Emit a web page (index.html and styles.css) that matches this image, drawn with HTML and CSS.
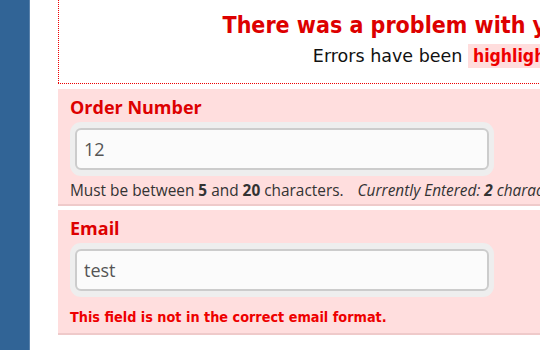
FILE: index.html
```html
<!DOCTYPE html>
<html lang="en">
<head>
<meta charset="utf-8">
<title>Form errors</title>
<link rel="stylesheet" href="styles.css">
</head>
<body>
<div class="layout">
  <aside class="sidebar"></aside>
  <main class="main">
    <div class="column">
      <div class="alert">
        <h1 class="alert-title">There was a problem with your submission.</h1>
        <p class="alert-text">Errors have been <span class="hl">highlighted</span> below.</p>
      </div>
      <div class="field">
        <label class="field-label" for="order">Order Number</label>
        <div class="ring"><input class="input" id="order" type="text" value="12"></div>
        <p class="help">Must be between <b>5</b> and <b>20</b> characters.<em class="count">Currently Entered: <b>2</b> characters</em></p>
      </div>
      <div class="field">
        <label class="field-label" for="email">Email</label>
        <div class="ring"><input class="input" id="email" type="text" value="test"></div>
        <p class="error">This field is not in the correct email format.</p>
      </div>
    </div>
  </main>
</div>
</body>
</html>
```
FILE: styles.css
```css
html, body {
  margin: 0;
  padding: 0;
  background: #ffffff;
  overflow: hidden;
}
body {
  width: 540px;
  height: 350px;
  font-family: "Open Sans", "DejaVu Sans", sans-serif;
}
.layout {
  display: flex;
  height: 350px;
}
.sidebar {
  flex: 0 0 29px;
  background: #316496;
  border-right: 1px solid #5a82ab;
}
.main {
  flex: 1 1 auto;
  padding-left: 28px;
  min-width: 0;
}
.column {
  width: 838px;
}
.alert {
  padding: 12px 11px 18px;
  text-align: center;
  margin-bottom: 5px;
  background-image:
    repeating-linear-gradient(to bottom, #ee0000 0 1px, transparent 1px 2px),
    repeating-linear-gradient(to bottom, #ee0000 0 1px, transparent 1px 2px),
    repeating-linear-gradient(to right, #ee0000 0 1px, transparent 1px 2px);
  background-size: 1px 100%, 1px 100%, 100% 1px;
  background-position: left top, right top, left bottom;
  background-repeat: no-repeat;
}
.alert-title {
  margin: 0;
  font-family: "DejaVu Sans Condensed", "DejaVu Sans", sans-serif;
  font-stretch: condensed;
  font-weight: 700;
  font-size: 23px;
  line-height: 26px;
  color: #dd0000;
}
.alert-text {
  margin: 8px 0 0;
  font-family: "DejaVu Sans", sans-serif;
  font-size: 17.5px;
  line-height: 20px;
  color: #111111;
}
.hl {
  background: #ffdddd;
  color: #ee0000;
  font-weight: 700;
  padding: 2px 5px;
  font-family: "DejaVu Sans Condensed", "DejaVu Sans", sans-serif;
  font-stretch: condensed;
}
.field {
  background: #ffdede;
  border-bottom: 2px solid #efcaca;
  padding: 6px 12px 3px;
  margin-bottom: 4px;
}
.field-label {
  display: block;
  font-weight: 700;
  font-size: 18px;
  line-height: 24px;
  color: #dd0000;
}
.ring {
  margin-top: 3px;
  width: 414px;
  padding: 6px 5px;
  background: #eeeeee;
  border-radius: 11px;
}
.input {
  display: block;
  box-sizing: border-box;
  width: 414px;
  height: 42px;
  margin: 0;
  border: 2px solid #cccccc;
  border-radius: 6px;
  background: #fbfbfb;
  padding: 0 7px;
  font-family: "Open Sans", sans-serif;
  font-size: 18px;
  color: #555555;
  outline: none;
}
.help {
  margin: 5px 0 0;
  font-size: 15.4px;
  line-height: 20px;
  color: #333333;
  white-space: nowrap;
}
.help b {
  font-weight: 700;
}
.count {
  margin-left: 14px;
}
.error {
  margin: 10px 0 0;
  padding-bottom: 3px;
  font-family: "DejaVu Sans Condensed", "DejaVu Sans", sans-serif;
  font-stretch: condensed;
  font-weight: 700;
  font-size: 14.3px;
  line-height: 20px;
  color: #ee0000;
}
```
